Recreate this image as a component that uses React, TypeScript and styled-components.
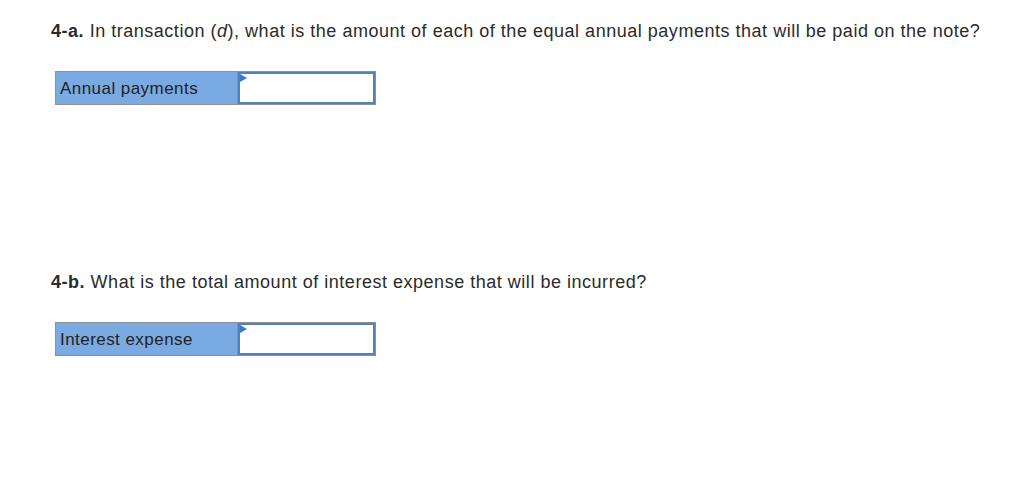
import React from "react";
import styled, { createGlobalStyle } from "styled-components";

const Global = createGlobalStyle`
  html, body { margin: 0; padding: 0; background: #ffffff; }
  body { font-family: "Liberation Sans", Arial, Helvetica, sans-serif; color: #333333; }
`;

const Page = styled.div`
  padding: 21px 0 0 51px;
  width: 1024px;
  height: 482px;
  box-sizing: border-box;
`;

const Section = styled.section<{ $gap: number }>`
  display: flex;
  flex-direction: column;
  align-items: flex-start;
  margin-bottom: ${(p) => p.$gap}px;
`;

const Question = styled.p`
  margin: 0;
  font-size: 18px;
  line-height: 20px;
  letter-spacing: 0.52px;
  color: #2b2b2b;
  white-space: nowrap;
  b { font-weight: 700; }
  i { font-style: italic; }
`;

const AnswerTable = styled.div`
  margin: 30px 0 0 4px;
  display: flex;
  border: 1px solid #8f8f8f;
  height: 32px;
  box-sizing: content-box;
`;

const LabelCell = styled.div`
  width: 182px;
  background: #7aaae2;
  border-right: 1px solid #8f8f8f;
  display: flex;
  align-items: center;
  padding: 1px 0 0 4px;
  box-sizing: border-box;
  font-size: 17px;
  letter-spacing: 0.45px;
  color: #222222;
`;

const InputCell = styled.div`
  position: relative;
  width: 137px;
  box-sizing: border-box;
  background: #ffffff;
`;

const Input = styled.input`
  display: block;
  width: 100%;
  height: 100%;
  box-sizing: border-box;
  border: 2px solid #5580bb;
  outline: none;
  margin: 0;
  padding: 0 6px;
  font: inherit;
  background: #ffffff;
`;

const Marker = styled.span`
  position: absolute;
  left: 2px;
  top: 2px;
  width: 0;
  height: 0;
  border-top: 4px solid transparent;
  border-bottom: 4px solid transparent;
  border-left: 7px solid #3f78c8;
`;

function Answer({ label }: { label: string }) {
  return (
    <AnswerTable>
      <LabelCell>{label}</LabelCell>
      <InputCell>
        <Input aria-label={label} />
        <Marker />
      </InputCell>
    </AnswerTable>
  );
}

export default function App() {
  return (
    <>
      <Global />
      <Page>
        <Section $gap={167}>
          <Question>
            <b>4-a.</b> In transaction (<i>d</i>), what is the amount of each of the equal annual payments that will be paid on the note?
          </Question>
          <Answer label="Annual payments" />
        </Section>
        <Section $gap={0}>
          <Question>
            <b>4-b.</b> What is the total amount of interest expense that will be incurred?
          </Question>
          <Answer label="Interest expense" />
        </Section>
      </Page>
    </>
  );
}
